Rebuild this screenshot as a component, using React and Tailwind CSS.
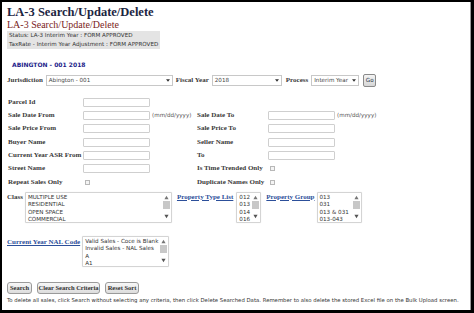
const sans = { fontFamily: '"DejaVu Sans", Verdana, sans-serif' };

const Field = () => <div className="w-[67px] h-[9px] border border-[#cfcfcf] rounded-[1px] bg-white" />;

const Check = () => <div className="w-[5px] h-[5px] border border-[#b8b8b8] bg-[#f4f4f4] ml-[2px]" />;

const Label = ({ children }) => (
  <div className="text-[7px] font-bold text-[#3a3a3a] whitespace-nowrap leading-none">{children}</div>
);

const Hint = () => (
  <div className="text-[5.6px] text-[#555] whitespace-nowrap leading-none pl-[1px]" style={sans}>
    (mm/dd/yyyy)
  </div>
);

const Scroll = ({ h }) => (
  <div className="w-[9px] flex flex-col items-center bg-white" style={{ height: h }}>
    <svg width="5" height="5" viewBox="0 0 6 6" className="mt-[2px]">
      <path d="M3 1 L5.5 5 L0.5 5 Z" fill="#777" />
    </svg>
    <div className="w-[7px] h-[8px] bg-[#c8c8c8] mt-[1px]" />
    <div className="flex-1" />
    <svg width="5" height="5" viewBox="0 0 6 6" className="mb-[3px]">
      <path d="M0.5 1 L5.5 1 L3 5 Z" fill="#555" />
    </svg>
  </div>
);

const ListBox = ({ items, w, h }) => (
  <div className="flex border border-[#d4d4d4] rounded-[1px] bg-white shadow-[0_0_1px_#ddd]" style={{ width: w, height: h }}>
    <div className="flex-1 pl-[2px] pt-[1px] overflow-hidden" style={sans}>
      {items.map((t) => (
        <div key={t} className="text-[5.6px] leading-[7.5px] text-[#333] whitespace-nowrap">{t}</div>
      ))}
    </div>
    <Scroll h={h - 2} />
  </div>
);

const Select = ({ w, value }) => (
  <div className="flex items-center justify-between h-[11px] border border-[#c8c8c8] bg-white px-[2px]" style={{ width: w }}>
    <span className="text-[5.6px] text-[#444] whitespace-nowrap" style={sans}>{value}</span>
    <svg width="4" height="3" viewBox="0 0 6 4"><path d="M0 0 L6 0 L3 4 Z" fill="#333" /></svg>
  </div>
);

const Btn = ({ children, w }) => (
  <div
    className="h-[12px] flex items-center justify-center border border-[#9a9a9a] rounded-[3px] bg-gradient-to-b from-[#f8f8f8] to-[#dcdcdc] text-[6.5px] font-bold text-[#333] whitespace-nowrap"
    style={{ width: w }}
  >
    {children}
  </div>
);

const rows = [
  ["Parcel Id", true, false, null, false],
  ["Sale Date From", true, true, "Sale Date To", "field-hint"],
  ["Sale Price From", true, false, "Sale Price To", "field"],
  ["Buyer Name", true, false, "Seller Name", "field"],
  ["Current Year ASR From", true, false, "To", "field"],
  ["Street Name", true, false, "Is Time Trended Only", "check"],
  ["Repeat Sales Only", false, false, "Duplicate Names Only", "check"],
];

export default function App() {
  return (
    <div className="w-[474px] h-[313px] bg-black pt-[2px] pl-[2px] pr-[3px] pb-[3px]" style={{ fontFamily: '"Liberation Serif", "Times New Roman", serif' }}>
      <div className="w-full h-full bg-white border-r border-[#9a9a9a] pl-[5px] overflow-hidden">
        <div className="text-[12.5px] font-bold text-[#1c2541] leading-none pt-[4px]">LA-3 Search/Update/Delete</div>
        <div className="text-[10px] text-[#7a2222] leading-none mt-[1px]">LA-3 Search/Update/Delete</div>
        <div className="w-[153px] bg-[#e4e4e4] mt-[1px] pl-[2px] text-[5.6px] text-[#333] leading-[9px] whitespace-nowrap" style={sans}>
          <div>Status: LA-3 Interim Year : FORM APPROVED</div>
          <div>TaxRate - Interim Year Adjustment : FORM APPROVED</div>
        </div>

        <div className="text-[6px] font-bold text-[#1d1d8a] leading-none mt-[13px] pl-[5px]" style={sans}>ABINGTON - 001 2018</div>

        <div className="flex items-center mt-[6px] h-[13px]">
          <Label>Jurisdiction</Label>
          <div className="ml-[3px]"><Select w={127} value="Abington - 001" /></div>
          <div className="ml-[3px]"><Label>Fiscal Year</Label></div>
          <div className="ml-[3px]"><Select w={70} value="2018" /></div>
          <div className="ml-[4px]"><Label>Process</Label></div>
          <div className="ml-[3px]"><Select w={48} value="Interim Year" /></div>
          <div className="ml-[4px] w-[13px] h-[13px] border border-[#8a8a8a] rounded-[2px] bg-gradient-to-b from-[#f4f4f4] to-[#d6d6d6] flex items-center justify-center text-[5.6px] text-[#234]" style={sans}>Go</div>
        </div>

        <div className="mt-[9px] pl-[1px] grid grid-cols-[75px_68px_46px_71px_68px_auto]">
          {rows.map(([l, lf, lh, r, rt]) => (
            <div key={l} className="contents">
              <div className="h-[13.33px] flex items-center"><Label>{l}</Label></div>
              <div className="h-[13.33px] flex items-center">{lf ? <Field /> : l === "Repeat Sales Only" ? <Check /> : null}</div>
              <div className="h-[13.33px] flex items-center">{lh ? <Hint /> : null}</div>
              <div className="h-[13.33px] flex items-center">{r ? <Label>{r}</Label> : null}</div>
              <div className="h-[13.33px] flex items-center">
                {rt === "field" || rt === "field-hint" ? <Field /> : rt === "check" ? <Check /> : null}
              </div>
              <div className="h-[13.33px] flex items-center">{rt === "field-hint" ? <Hint /> : null}</div>
            </div>
          ))}
        </div>

        <div className="flex items-start mt-[3px]">
          <div className="mt-[2px]"><Label>Class</Label></div>
          <div className="ml-[2px]">
            <ListBox w={147} h={31} items={["MULTIPLE USE", "RESIDENTIAL", "OPEN SPACE", "COMMERCIAL"]} />
          </div>
          <div className="ml-[5px] mt-[2px] text-[7px] font-bold text-[#2c4f9a] underline leading-none whitespace-nowrap">Property Type List</div>
          <div className="ml-[3px]">
            <ListBox w={25} h={31} items={["012", "013", "014", "016"]} />
          </div>
          <div className="ml-[5px] mt-[2px] text-[7px] font-bold text-[#2c4f9a] underline leading-none whitespace-nowrap">Property Group</div>
          <div className="ml-[2px]">
            <ListBox w={45} h={31} items={["013", "031", "013 & 031", "013-043"]} />
          </div>
        </div>

        <div className="flex items-start mt-[13px]">
          <div className="mt-[3px] text-[7px] font-bold text-[#2c4f9a] underline leading-none whitespace-nowrap">Current Year NAL Code</div>
          <div className="ml-[2px]">
            <ListBox w={87} h={31} items={["Valid Sales - Coce is Blank", "Invalid Sales - NAL Sales", "A", "A1"]} />
          </div>
        </div>

        <div className="flex items-center gap-[5px] mt-[15px]">
          <Btn w={25}>Search</Btn>
          <Btn w={63}>Clear Search Criteria</Btn>
          <Btn w={34}>Reset Sort</Btn>
        </div>

        <div className="text-[5.35px] text-[#333] leading-none mt-[4px] whitespace-nowrap" style={sans}>
          To delete all sales, click Search without selecting any criteria, then click Delete Searched Data. Remember to also delete the stored Excel file on the Bulk Upload screen.
        </div>
      </div>
    </div>
  );
}
